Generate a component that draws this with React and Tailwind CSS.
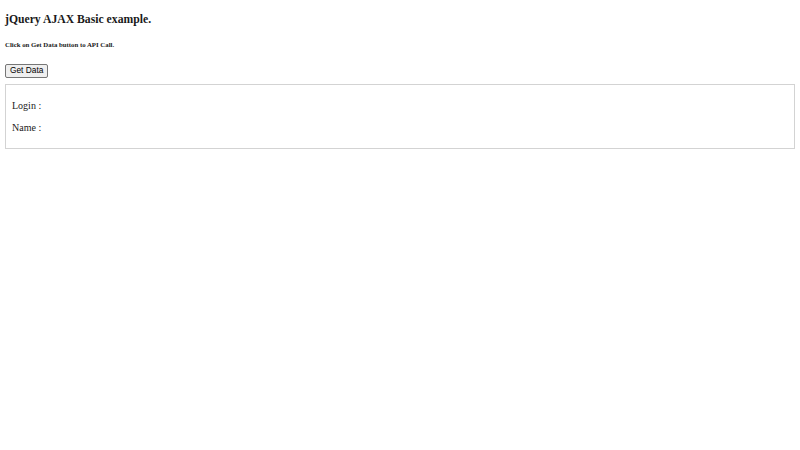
export default function App() {
  return (
    <div className="w-[800px] h-[450px] bg-white px-[5px] pt-[12.5px] font-['Liberation_Serif',serif] text-[#1a1a1a]">
      <h3 className="text-[11.7px] font-bold leading-[13.5px]">jQuery AJAX Basic example.</h3>
      <h6 className="mt-[14.8px] text-[6.8px] font-bold leading-[7.7px]">Click on Get Data button to API Call.</h6>
      <div className="mt-[15.6px] flex">
        <button className="h-[13.5px] px-[4px] rounded-[2px] border border-[#767676] bg-[#efefef] font-['Liberation_Sans',sans-serif] text-[8.33px] leading-[9px] text-black">
          Get Data
        </button>
      </div>
      <div className="mt-[6px] border border-[#d3d3d3] px-[6px] pt-[5.5px] pb-[5px]">
        <p className="my-[10px] text-[10px] leading-[11.5px]">Login :</p>
        <p className="my-[10px] text-[10px] leading-[11.5px]">Name :</p>
      </div>
    </div>
  );
}
